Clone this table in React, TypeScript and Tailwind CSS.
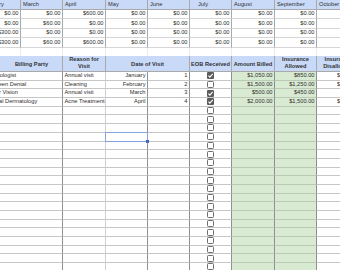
import React from "react";

const months = ["January", "March", "April", "May", "June", "July", "August", "September", "October"];

const totals = [
  ["$0.00", "$0.00", "$600.00", "$0.00", "$0.00", "$0.00", "$0.00", "$0.00", ""],
  ["$0.00", "$60.00", "$0.00", "$0.00", "$0.00", "$0.00", "$0.00", "$0.00", ""],
  ["$300.00", "$0.00", "$0.00", "$0.00", "$0.00", "$0.00", "$0.00", "$0.00", ""],
  ["$300.00", "$60.00", "$600.00", "$0.00", "$0.00", "$0.00", "$0.00", "$0.00", ""],
];
const totalHeights = ["h-[9px]", "h-[10px]", "h-[9px]", "h-[10px]"];

type Visit = {
  party: string;
  reason: string;
  date: string;
  eob: boolean;
  billed: string;
  allowed: string;
  disallowed: string;
};

const visits: Visit[] = [
  { party: "Dermatologist", reason: "Annual visit", date: "January", eob: true, billed: "$1,050.00", allowed: "$850.00", disallowed: "$200.00" },
  { party: "Bay Green Dental", reason: "Cleaning", date: "February", eob: false, billed: "$1,500.00", allowed: "$1,250.00", disallowed: "$250.00" },
  { party: "Premier Vision", reason: "Annual visit", date: "March", eob: true, billed: "$500.00", allowed: "$450.00", disallowed: "$50.00" },
  { party: "Regional Dermatology", reason: "Acne Treatment", date: "April", eob: true, billed: "$2,000.00", allowed: "$1,500.00", disallowed: "$500.00" },
];

const ROWS = 23;
const SELECTED_ROW = 7;

function Checkbox({ checked }: { checked: boolean }) {
  return (
    <svg width="7" height="7" viewBox="0 0 7 7">
      {checked ? (
        <>
          <rect x="0" y="0" width="7" height="7" rx="1" fill="#5b5b5b" />
          <path d="M1.4 3.6 L2.9 5.1 L5.7 1.9" stroke="#fff" strokeWidth="1.1" fill="none" />
        </>
      ) : (
        <rect x="0.5" y="0.5" width="6" height="6" rx="0.8" fill="#fff" stroke="#6e6e6e" strokeWidth="1" />
      )}
    </svg>
  );
}

export default function App() {
  return (
    <div className="w-[340px] h-[270px] overflow-hidden bg-white font-['Liberation_Sans',Arial,sans-serif] text-[5.7px] leading-none text-[#2e2e2e]">
      <div className="ml-[-21px] w-[381px]">
        {/* Monthly totals */}
        <div className="grid grid-cols-[42px_42px_43px_42px_42px_42px_43px_42px_43px] h-[10px] bg-[#c9daf8]">
          {months.map((m, i) => (
            <div
              key={m}
              className={`flex items-center whitespace-nowrap overflow-hidden border-r border-b border-[#a9a9a9] ${
                i === 0 ? "pl-[4.5px]" : i === 5 ? "pl-[8px]" : "pl-[2px]"
              }`}
            >
              {m}
            </div>
          ))}
        </div>
        {totals.map((row, r) => (
          <div key={r} className={`grid grid-cols-[42px_42px_43px_42px_42px_42px_43px_42px_43px] ${totalHeights[r]}`}>
            {row.map((v, c) => (
              <div
                key={c}
                className="flex items-center justify-end pr-[1.5px] whitespace-nowrap border-r border-b border-r-[#a9a9a9] border-b-[#d6d6d6]"
              >
                {v}
              </div>
            ))}
          </div>
        ))}
        {/* spacer row */}
        <div className="grid grid-cols-[42px_42px_43px_42px_42px_42px_43px_42px_43px] h-[8px]">
          {months.map((m) => (
            <div key={m} className="border-r border-[#ececec]" />
          ))}
        </div>

        {/* Visits header */}
        <div className="grid grid-cols-[84px_43px_84px_42px_43px_42px_43px] h-[16px] bg-[#c9daf8] font-bold text-[#333] text-center">
          <div className="flex items-end justify-center pb-[3px] pl-[22px] border-r border-b border-[#a9a9a9] whitespace-nowrap">Billing Party</div>
          <div className="flex flex-col items-center justify-center gap-[1.5px] border-r border-b border-[#a9a9a9] whitespace-nowrap">
            <span>Reason for</span>
            <span>Visit</span>
          </div>
          <div className="flex items-end justify-center pb-[3px] border-r border-b border-[#a9a9a9] whitespace-nowrap">Date of Visit</div>
          <div className="flex items-end justify-center pb-[3px] border-r border-b border-[#a9a9a9] whitespace-nowrap">EOB Received</div>
          <div className="flex items-end justify-center pb-[3px] border-r border-b border-[#a9a9a9] whitespace-nowrap">Amount Billed</div>
          <div className="flex flex-col items-center justify-center gap-[1.5px] border-r border-b border-[#a9a9a9] whitespace-nowrap">
            <span>Insurance</span>
            <span>Allowed</span>
          </div>
          <div className="flex flex-col items-center justify-center gap-[1.5px] border-r border-b border-[#a9a9a9] whitespace-nowrap">
            <span>Insurance</span>
            <span>Disallowed</span>
          </div>
        </div>

        {/* Visit rows */}
        {Array.from({ length: ROWS }).map((_, r) => {
          const v = visits[r];
          return (
            <div key={r} className="grid grid-cols-[84px_43px_42px_42px_42px_43px_42px_43px] h-[8.7px]">
              <div className="flex items-center pl-[2px] whitespace-nowrap overflow-hidden border-r border-b border-r-[#8f8f8f] border-b-[#c6c6c6]">
                {v?.party}
              </div>
              <div className="flex items-center pl-[1.5px] whitespace-nowrap overflow-hidden border-r border-b border-r-[#cfcfcf] border-b-[#c6c6c6]">
                {v?.reason}
              </div>
              <div className="relative flex items-center justify-end pr-[1.5px] whitespace-nowrap border-r border-b border-r-[#8f8f8f] border-b-[#c6c6c6]">
                {v?.date}
                {r === SELECTED_ROW && (
                  <>
                    <div className="absolute inset-[-1px] border border-[#86a3e4]" />
                    <div className="absolute right-[-2px] bottom-[-2px] w-[3px] h-[3px] bg-[#3762c8]" />
                  </>
                )}
              </div>
              <div className="flex items-center justify-end pr-[1.5px] border-r border-b border-r-[#8f8f8f] border-b-[#c6c6c6]">
                {v ? r + 1 : ""}
              </div>
              <div className="flex items-center justify-center border-r border-b border-r-[#8f8f8f] border-b-[#c6c6c6]">
                <Checkbox checked={!!v?.eob} />
              </div>
              <div className="flex items-center justify-end pr-[1.5px] whitespace-nowrap bg-[#d9ead3] border-r border-b border-r-[#8f8f8f] border-b-[#bcc9b7]">
                {v?.billed}
              </div>
              <div className="flex items-center justify-end pr-[1.5px] whitespace-nowrap bg-[#d9ead3] border-r border-b border-r-[#8f8f8f] border-b-[#bcc9b7]">
                {v?.allowed}
              </div>
              <div className="flex items-center justify-end pr-[1.5px] whitespace-nowrap border-r border-b border-r-[#8f8f8f] border-b-[#c6c6c6]">
                {v?.disallowed}
              </div>
            </div>
          );
        })}
      </div>
    </div>
  );
}
